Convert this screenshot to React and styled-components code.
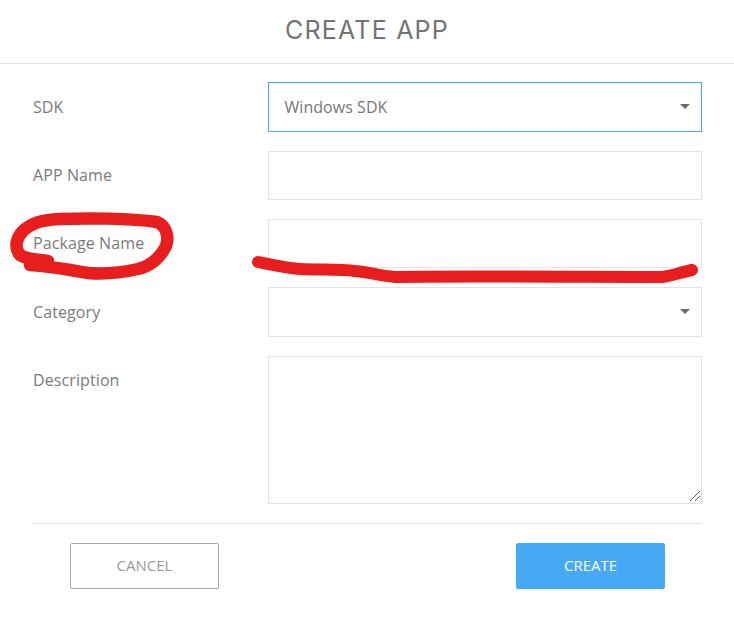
import React from "react";
import styled, { createGlobalStyle } from "styled-components";

const Global = createGlobalStyle`
  html, body { margin: 0; padding: 0; background: #fff; }
  * { box-sizing: border-box; }
`;

const Dialog = styled.div`
  position: relative;
  width: 734px;
  height: 617px;
  overflow: hidden;
  background: #fff;
  font-family: "Open Sans", sans-serif;
`;

const Header = styled.header`
  height: 64px;
  border-bottom: 1px solid #e5e5e5;
  display: flex;
  align-items: center;
  justify-content: center;
  padding-bottom: 3px;
`;

const Title = styled.h1`
  margin: 0;
  font-family: Inter, sans-serif;
  font-size: 25px;
  font-weight: 400;
  letter-spacing: 1.2px;
  color: #737373;
`;

const Form = styled.form`
  display: flex;
  flex-direction: column;
  gap: 19px;
  padding: 18.3px 32px 0;
`;

const Row = styled.div`
  display: grid;
  grid-template-columns: 236px 434px;
  align-items: start;
`;

const Label = styled.label`
  font-size: 16px;
  line-height: 24px;
  letter-spacing: 0.1px;
  color: #7b7b7b;
  padding: 12.4px 0 0 1px;
`;

const Field = styled.div`
  height: 49.33px;
  background: #fff;
  border: 1px solid ${(p) => (p.$focus ? "#45a9f4" : "#e3e3e3")};
  display: flex;
  align-items: center;
  justify-content: space-between;
  padding: 0 11px 0 15.5px;
  font-size: 16px;
  letter-spacing: 0.05px;
  color: #777;
`;

const Caret = styled.span`
  width: 0;
  height: 0;
  border-left: 5px solid transparent;
  border-right: 5px solid transparent;
  border-top: 5px solid #6b6b6b;
`;

const TextArea = styled.div`
  position: relative;
  height: 148px;
  border: 1px solid #e3e3e3;
  background: #fff;
`;

const Grip = styled.svg`
  position: absolute;
  right: 0;
  bottom: 1px;
  width: 12px;
  height: 12px;
`;

const Divider = styled.hr`
  margin: 19px 32px 0;
  border: 0;
  border-top: 1px solid #e5e5e5;
`;

const Footer = styled.footer`
  display: flex;
  justify-content: space-between;
  padding: 19px 69px 0 70px;
`;

const Button = styled.button`
  width: 149px;
  height: 46px;
  border-radius: 2px;
  border: 1px solid ${(p) => (p.$primary ? "#45a9f4" : "#a8a8a8")};
  background: ${(p) => (p.$primary ? "#45a9f4" : "#fff")};
  color: ${(p) => (p.$primary ? "#fff" : "#9a9a9a")};
  font-family: "Open Sans", sans-serif;
  font-size: 15px;
  padding: 0 0 1px;
`;

const Scribble = styled.svg`
  position: absolute;
  inset: 0;
  width: 734px;
  height: 617px;
  pointer-events: none;
`;

export default function App() {
  return (
    <Dialog>
      <Global />
      <Header>
        <Title>CREATE APP</Title>
      </Header>
      <Form>
        <Row>
          <Label>SDK</Label>
          <Field $focus>
            Windows SDK
            <Caret />
          </Field>
        </Row>
        <Row>
          <Label>APP Name</Label>
          <Field />
        </Row>
        <Row>
          <Label>Package Name</Label>
          <Field />
        </Row>
        <Row>
          <Label>Category</Label>
          <Field>
            <span />
            <Caret />
          </Field>
        </Row>
        <Row>
          <Label>Description</Label>
          <TextArea>
            <Grip viewBox="0 0 12 12">
              <path d="M1 11L11 1M6 11L11 6" stroke="#555" strokeWidth="1" fill="none" />
            </Grip>
          </TextArea>
        </Row>
      </Form>
      <Divider />
      <Footer>
        <Button type="button">CANCEL</Button>
        <Button type="button" $primary>CREATE</Button>
      </Footer>
      <Scribble viewBox="0 0 734 617">
        <g fill="none" stroke="#e81e1e" strokeLinecap="round" strokeLinejoin="round">
          <path
            strokeWidth="12.5"
            d="M48 261 C38 260 26 259 20 255 C14 248 16 238 23 231 C31 223 42 219.5 60 219 C85 218 130 218 157 222 C167 226 169 238 166 246 C160 258 150 266 138 269 C120 273 100 274 88 273 C70 270 50 266 30 265"
          />
          <path
            strokeWidth="12"
            d="M258 262 C272 265 285 268 300 269 C320 270 340 269 355 271 C375 273 385 277 400 277 C450 276 600 277 662 277 C672 276 682 272 692 270"
          />
        </g>
      </Scribble>
    </Dialog>
  );
}
